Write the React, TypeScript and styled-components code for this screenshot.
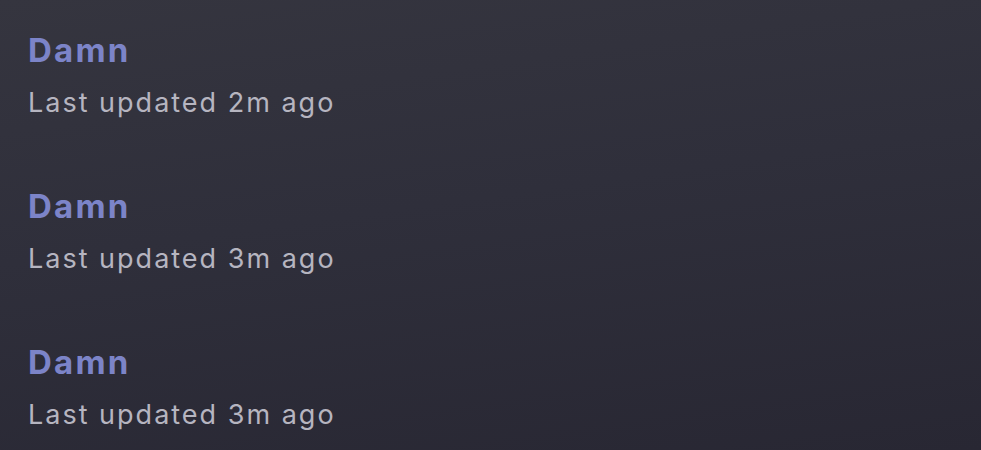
import type { FC } from 'react';
import styled, { createGlobalStyle } from 'styled-components';

const GlobalStyle = createGlobalStyle`
  * {
    margin: 0;
    padding: 0;
    box-sizing: border-box;
  }

  html, body {
    height: 100%;
  }

  body {
    font-family: 'Inter', 'Noto Sans', sans-serif;
    background: linear-gradient(172deg, #35353f 0%, #2f2f3b 45%, #282733 100%);
    overflow: hidden;
  }
`;

const List = styled.main`
  display: flex;
  flex-direction: column;
  gap: 67px;
  padding: 30px 28px 0;
  height: 450px;
`;

const Item = styled.div`
  display: flex;
  flex-direction: column;
  gap: 17px;
`;

const Title = styled.h2`
  font-size: 33px;
  font-weight: 700;
  line-height: 40px;
  letter-spacing: 2.2px;
  color: #7c84c8;
`;

const Updated = styled.p`
  font-size: 27px;
  font-weight: 400;
  line-height: 32px;
  letter-spacing: 2px;
  color: #b6b5c0;
`;

const docs = [
  { id: 1, name: 'Damn', ago: '2m' },
  { id: 2, name: 'Damn', ago: '3m' },
  { id: 3, name: 'Damn', ago: '3m' },
];

const App: FC = () => {
  return (
    <>
      <GlobalStyle />
      <List>
        {docs.map((doc) => (
          <Item key={doc.id}>
            <Title>{doc.name}</Title>
            <Updated>Last updated {doc.ago} ago</Updated>
          </Item>
        ))}
      </List>
    </>
  );
};

export default App;
